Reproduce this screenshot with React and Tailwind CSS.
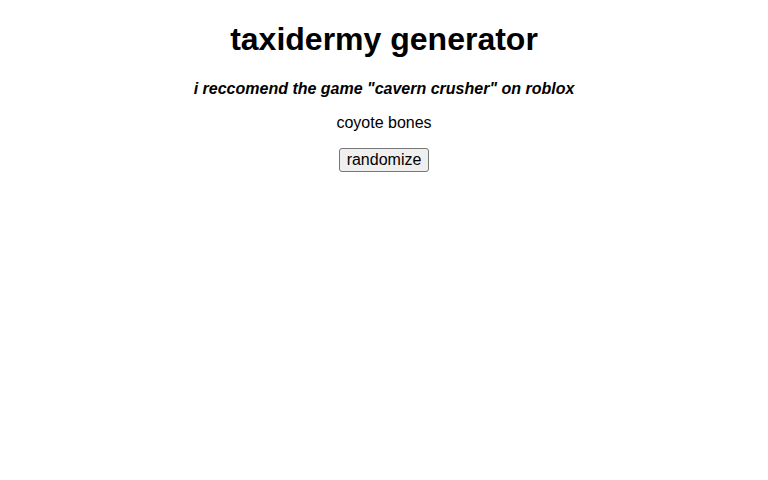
export default function App() {
  return (
    <div className="min-h-screen bg-white text-black text-center font-['Liberation_Sans',Arial,sans-serif] flex flex-col items-center">
      <h1 className="mt-[21px] text-[32px] leading-[37px] font-bold">taxidermy generator</h1>
      <h4 className="mt-[22px] text-[16px] leading-[18px] font-bold italic">i reccomend the game "cavern crusher" on roblox</h4>
      <div className="mt-[16px] text-[16px] leading-[18px]">coyote bones</div>
      <button className="mt-[16px] text-[16px] leading-[18px] px-[7px] py-[2px] bg-[#efefef] border border-[#767676] rounded-[3px] text-black">randomize</button>
    </div>
  );
}
